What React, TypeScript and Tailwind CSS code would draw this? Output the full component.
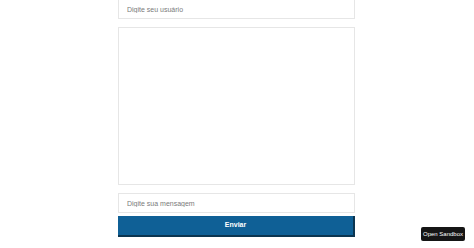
import React from 'react';

export default function App() {
  return (
    <div className="relative w-[474px] h-[248px] bg-white overflow-hidden" style={{ fontFamily: '"Liberation Sans", Arial, sans-serif' }}>
      <div className="ml-[118px] w-[237px] flex flex-col">
        <input
          placeholder="Digite seu usuário"
          className="h-[20px] -mt-px border border-[#e6e6e6] px-[8px] text-[7px] text-[#555] placeholder:text-[#7a7a7a] outline-none"
        />
        <textarea className="mt-[8px] h-[158px] border border-[#e6e6e6] resize-none outline-none" />
        <input
          placeholder="Digite sua mensagem"
          className="mt-[8px] h-[20px] border border-[#e6e6e6] px-[8px] text-[7px] text-[#555] placeholder:text-[#7a7a7a] outline-none"
        />
        <button className="mt-[3px] h-[21px] bg-[#0f6096] border-r-[2px] border-b-[2px] border-[#0b3550] text-white text-[7px] font-bold">
          Enviar
        </button>
      </div>
      <div className="absolute left-[421px] top-[227px] w-[44px] h-[14px] rounded-[2px] bg-[#151515] text-white text-[6px] flex items-center justify-center">
        Open Sandbox
      </div>
    </div>
  );
}
